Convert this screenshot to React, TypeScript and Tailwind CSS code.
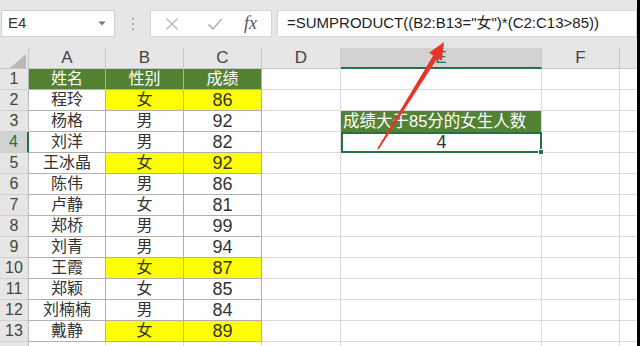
import React from "react";

const FONT = { fontFamily: '"Liberation Sans", "Noto Sans CJK SC", sans-serif' };

type Row = { n: number; a: string; b: string; c: string; hl?: boolean; head?: boolean };

const rows: Row[] = [
  { n: 1, a: "姓名", b: "性别", c: "成绩", head: true },
  { n: 2, a: "程玲", b: "女", c: "86", hl: true },
  { n: 3, a: "杨格", b: "男", c: "92" },
  { n: 4, a: "刘洋", b: "男", c: "82" },
  { n: 5, a: "王冰晶", b: "女", c: "92", hl: true },
  { n: 6, a: "陈伟", b: "男", c: "86" },
  { n: 7, a: "卢静", b: "女", c: "81" },
  { n: 8, a: "郑桥", b: "男", c: "99" },
  { n: 9, a: "刘青", b: "男", c: "94" },
  { n: 10, a: "王霞", b: "女", c: "87", hl: true },
  { n: 11, a: "郑颖", b: "女", c: "85" },
  { n: 12, a: "刘楠楠", b: "男", c: "84" },
  { n: 13, a: "戴静", b: "女", c: "89", hl: true },
];

function TableCell({ text, w, head, hl, num }: { text: string; w: string; head?: boolean; hl?: boolean; num?: boolean }) {
  const bg = head ? "bg-[#548235] text-white" : hl ? "bg-[#ffff00] text-[#333]" : "bg-white text-[#333]";
  return (
    <div className={`${w} h-full shrink-0 flex items-center justify-center border-r border-b border-[#b0b0b0] ${bg} ${num ? "text-[18px]" : "text-[16px]"}`}>
      {text}
    </div>
  );
}

function Grid({ w, children, className = "" }: { w: string; children?: React.ReactNode; className?: string }) {
  return <div className={`${w} h-full shrink-0 border-r border-b border-[#dadada] bg-white ${className}`}>{children}</div>;
}

export default function App() {
  return (
    <div className="relative w-[640px] h-[346px] overflow-hidden flex bg-white" style={FONT}>
      <div className="flex-1 flex flex-col min-w-0">
        {/* formula bar */}
        <div className="h-[48px] shrink-0 bg-[#e6e6e6] flex items-start pt-[10px] pl-[1px]">
          <div className="w-[114px] h-[27px] bg-white border border-[#d0d0d0] flex items-center justify-between pl-[6px] pr-[8px]">
            <span className="text-[15px] text-[#333]">E4</span>
            <svg width="8" height="5" viewBox="0 0 8 5"><path d="M0.5 0.5 L7.5 0.5 L4 4.5Z" fill="#777" /></svg>
          </div>
          <div className="w-[35px] h-[27px] flex items-center justify-center">
            <svg width="4" height="14" viewBox="0 0 4 14">
              <circle cx="2" cy="2" r="1" fill="#9a9a9a" />
              <circle cx="2" cy="7" r="1" fill="#9a9a9a" />
              <circle cx="2" cy="12" r="1" fill="#9a9a9a" />
            </svg>
          </div>
          <div className="w-[122px] h-[27px] bg-white border border-[#d6d6d6] flex items-center pl-[14px]">
            <svg width="14" height="14" viewBox="0 0 14 14">
              <path d="M1.5 1.5 L12.5 12.5 M12.5 1.5 L1.5 12.5" stroke="#b9b9b9" strokeWidth="1.3" />
            </svg>
            <svg width="16" height="14" viewBox="0 0 16 14" className="ml-[28px]">
              <path d="M1.5 7.5 L6 12 L14.5 2" stroke="#b9b9b9" strokeWidth="1.8" fill="none" />
            </svg>
            <span className="ml-[21px] text-[18px] italic text-[#555]" style={{ fontFamily: '"Liberation Serif", serif' }}>fx</span>
          </div>
          <div className="ml-[5px] flex-1 h-[27px] bg-white border border-[#d6d6d6] flex items-center pl-[9px] text-[15px] text-[#222] whitespace-nowrap">
            =SUMPRODUCT((B2:B13="女")*(C2:C13&gt;85))
          </div>
        </div>

        {/* column headers */}
        <div className="h-[21px] shrink-0 flex bg-[#e6e6e6] text-[17px] text-[#444]">
          <div className="w-[29px] h-full shrink-0 relative border-r border-b border-[#c8c8c8]">
            <svg className="absolute left-[10px] top-[6px]" width="16" height="14" viewBox="0 0 16 14"><path d="M16 0 L16 14 L0 14Z" fill="#b9b9b9" /></svg>
          </div>
          {[
            ["A", "w-[77px]"],
            ["B", "w-[78px]"],
            ["C", "w-[78px]"],
            ["D", "w-[79px]"],
          ].map(([l, w]) => (
            <div key={l} className={`${w} h-full shrink-0 flex items-center justify-center border-r border-b border-[#c8c8c8]`}>{l}</div>
          ))}
          <div className="w-[201px] h-full shrink-0 flex items-center justify-center bg-[#d2d2d2] border-r border-[#c8c8c8] border-b-2 border-b-[#217346] text-[#217346]">E</div>
          <div className="w-[78px] h-full shrink-0 flex items-center justify-center border-r border-b border-[#c8c8c8]">F</div>
          <div className="flex-1 h-full border-b border-[#c8c8c8]" />
        </div>

        {/* data rows */}
        {rows.map((r) => (
          <div key={r.n} className="h-[21px] shrink-0 flex">
            <div
              className={`w-[29px] h-full shrink-0 flex items-center justify-center text-[16px] border-b border-[#d0d0d0] ${
                r.n === 4
                  ? "bg-[#d2d2d2] text-[#217346] border-r-2 border-r-[#217346]"
                  : "bg-[#e6e6e6] text-[#444] border-r border-r-[#b9b9b9]"
              }`}
            >
              {r.n}
            </div>
            <TableCell w="w-[77px]" text={r.a} head={r.head} />
            <TableCell w="w-[78px]" text={r.b} head={r.head} hl={r.hl} />
            <TableCell w="w-[78px]" text={r.c} head={r.head} hl={r.hl} num={!r.head} />
            <Grid w="w-[79px]" />
            {r.n === 3 ? (
              <div className="w-[201px] h-full shrink-0 bg-[#548235] text-white text-[16.5px] flex items-center pl-[2px] whitespace-nowrap border-r border-[#dadada]">
                成绩大于85分的女生人数
              </div>
            ) : r.n === 4 ? (
              <div className="relative w-[201px] h-full shrink-0 border-2 border-[#217346] bg-white flex items-center justify-center text-[18px] text-[#333]">
                4
                <div className="absolute right-[-4px] bottom-[-4px] w-[6px] h-[6px] bg-[#217346] border border-white" />
              </div>
            ) : (
              <Grid w="w-[201px]" />
            )}
            <Grid w="w-[78px]" />
            <div className="flex-1 h-full border-b border-[#dadada] bg-white" />
          </div>
        ))}
        <div className="flex-1 flex">
          <div className="w-[29px] h-full bg-[#e6e6e6] border-r border-[#b9b9b9]" />
          <div className="w-[77px] border-r border-[#dadada]" />
          <div className="w-[78px] border-r border-[#dadada]" />
          <div className="w-[78px] border-r border-[#dadada]" />
          <div className="w-[79px] border-r border-[#dadada]" />
          <div className="w-[201px] border-r border-[#dadada]" />
          <div className="w-[78px] border-r border-[#dadada]" />
        </div>
      </div>
      <div className="w-[3px] shrink-0 bg-black" />

      {/* red arrow */}
      <svg className="absolute left-0 top-0 pointer-events-none" width="640" height="346" viewBox="0 0 640 346">
        <polygon
          points="377.3,148.6 433.2,55.4 429.2,52.8 444,42 441.8,60.8 437.4,58.2 378.7,149.4"
          fill="#e8352c"
        />
      </svg>
    </div>
  );
}
